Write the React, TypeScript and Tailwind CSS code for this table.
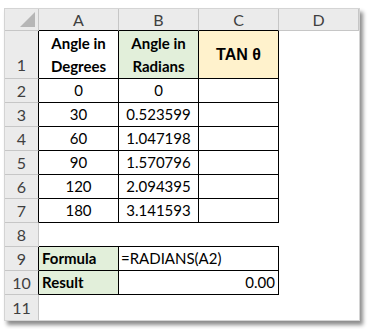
import React from "react";

type Row = {
  n: string;
  h: string;
  a: React.ReactNode;
  b: React.ReactNode;
};

const hdr = "flex items-center justify-center bg-[#ebebeb] text-[#3f3f3f] border-b border-[#c6c6c6]";

const rows: Row[] = [
  { n: "2", h: "h-[24px]", a: "0", b: "0" },
  { n: "3", h: "h-[24px]", a: "30", b: "0.523599" },
  { n: "4", h: "h-[24px]", a: "60", b: "1.047198" },
  { n: "5", h: "h-[24px]", a: "90", b: "1.570796" },
  { n: "6", h: "h-[24px]", a: "120", b: "2.094395" },
  { n: "7", h: "h-[24px]", a: "180", b: "3.141593" },
];

const App = () => {
  return (
    <div className="h-[329px] w-[369px] bg-white pl-[4px] pt-[8px] font-['Lato',sans-serif] text-[15px] text-black">
      <div className="w-[356px] border border-[#d4d4d4] shadow-[3px_4px_4px_rgba(0,0,0,0.45)]">
        <div className="grid grid-cols-[34px_80px_80px_80px_80px]">
          {/* column headers */}
          <div className="relative h-[22px] border-r border-b border-[#c6c6c6] bg-[#ebebeb]">
            <div className="absolute bottom-[3px] right-[3px] h-0 w-0 border-t-[15px] border-r-[15px] border-t-transparent border-r-[#b6b6b6]" />
          </div>
          {["A", "B", "C", "D"].map((l, i) => (
            <div
              key={l}
              className={`${hdr} h-[22px] border-r ${i < 3 ? "border-b-black" : ""} text-[16px]`}
            >
              {l}
            </div>
          ))}

          {/* row 1 */}
          <div className="flex h-[48px] items-end justify-center border-r border-b border-r-black border-b-[#c6c6c6] bg-[#ebebeb] pb-[1px] text-[16px] text-[#3f3f3f]">
            1
          </div>
          <div className="flex h-[48px] flex-col items-center justify-center border-r border-b border-black font-bold leading-[23px]">
            <span>Angle in</span>
            <span>Degrees</span>
          </div>
          <div className="flex h-[48px] flex-col items-center justify-center border-r border-b border-black bg-[#e2efda] font-bold leading-[23px]">
            <span>Angle in</span>
            <span>Radians</span>
          </div>
          <div className="flex h-[48px] items-center justify-center border-r border-b border-black bg-[#fff2cc] font-['Liberation_Sans',sans-serif] text-[16px] font-bold">
            TAN θ
          </div>
          <div className="h-[48px]" />

          {rows.map((r) => (
            <React.Fragment key={r.n}>
              <div className={`${hdr} ${r.h} border-r border-r-black text-[16px]`}>{r.n}</div>
              <div className={`flex ${r.h} items-center justify-center border-r border-b border-black`}>{r.a}</div>
              <div className={`flex ${r.h} items-center justify-center border-r border-b border-black`}>{r.b}</div>
              <div className={`${r.h} border-r border-b border-black`} />
              <div className={r.h} />
            </React.Fragment>
          ))}

          {/* row 8 */}
          <div className={`${hdr} h-[24px] border-r text-[16px]`}>8</div>
          <div className="col-span-3 h-[24px] border-b border-black" />
          <div className="h-[24px]" />

          {/* row 9 */}
          <div className={`${hdr} h-[24px] border-r border-r-black text-[16px]`}>9</div>
          <div className="flex h-[24px] items-center border-r border-b border-black bg-[#e2efda] pl-[3px] font-bold">
            Formula
          </div>
          <div className="col-span-2 flex h-[24px] items-center border-r border-b border-black pl-[2px]">
            =RADIANS(A2)
          </div>
          <div className="h-[24px]" />

          {/* row 10 */}
          <div className={`${hdr} h-[24px] border-r border-r-black text-[16px]`}>10</div>
          <div className="flex h-[24px] items-center border-r border-b border-black bg-[#e2efda] pl-[3px] font-bold">
            Result
          </div>
          <div className="col-span-2 flex h-[24px] items-center justify-end border-r border-b border-black pr-[3px]">
            0.00
          </div>
          <div className="h-[24px]" />

          {/* row 11 */}
          <div className={`${hdr} h-[25px] border-r border-b-0 text-[16px]`}>11</div>
          <div className="col-span-4 h-[25px]" />
        </div>
      </div>
    </div>
  );
};

export default App;
